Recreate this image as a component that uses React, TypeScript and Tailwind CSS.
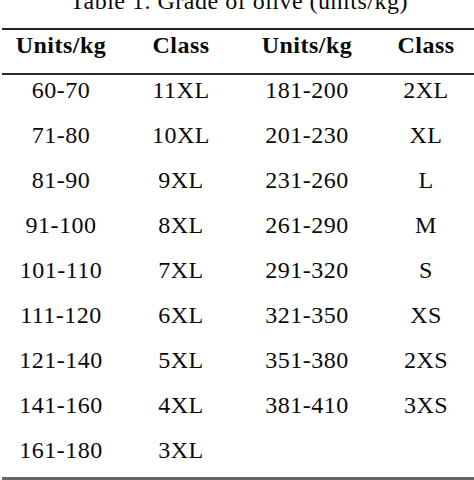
import React from 'react';

const rows: [string, string, string, string][] = [
  ['60-70', '11XL', '181-200', '2XL'],
  ['71-80', '10XL', '201-230', 'XL'],
  ['81-90', '9XL', '231-260', 'L'],
  ['91-100', '8XL', '261-290', 'M'],
  ['101-110', '7XL', '291-320', 'S'],
  ['111-120', '6XL', '321-350', 'XS'],
  ['121-140', '5XL', '351-380', '2XS'],
  ['141-160', '4XL', '381-410', '3XS'],
  ['161-180', '3XL', '', ''],
];

const cols = 'grid grid-cols-[118px_122px_130px_102px]';

export default function App() {
  return (
    <div className="w-[474px] h-[480px] overflow-hidden bg-white text-[#0a0a0a] font-[family-name:'Liberation_Serif','Times_New_Roman',serif] text-[24px] leading-[24px] tracking-[0.5px]">
      {/* caption, top is cut off in the source */}
      <div className="-mt-[11px] h-[39px] pl-[4px] text-center whitespace-nowrap">
        Table 1. Grade of olive (units/kg)
      </div>

      <div className="ml-[2px] w-[472px] border-t-2 border-[#222]">
        {/* header */}
        <div className={`${cols} h-[45px] pt-[3px] font-bold border-b-2 border-[#2a2a2a]`}>
          <div className="text-center">Units/kg</div>
          <div className="text-center">Class</div>
          <div className="text-center">Units/kg</div>
          <div className="text-center pl-[6px]">Class</div>
        </div>

        {/* body */}
        <div className="h-[405px] border-b-[3px] border-[#666]">
          {rows.map((r, i) => (
            <div key={i} className={`${cols} h-[45px] pt-[3px]`}>
              <div className="text-center">{r[0]}</div>
              <div className="text-center">{r[1]}</div>
              <div className="text-center">{r[2]}</div>
              <div className="text-center pl-[6px]">{r[3]}</div>
            </div>
          ))}
        </div>
      </div>
    </div>
  );
}
